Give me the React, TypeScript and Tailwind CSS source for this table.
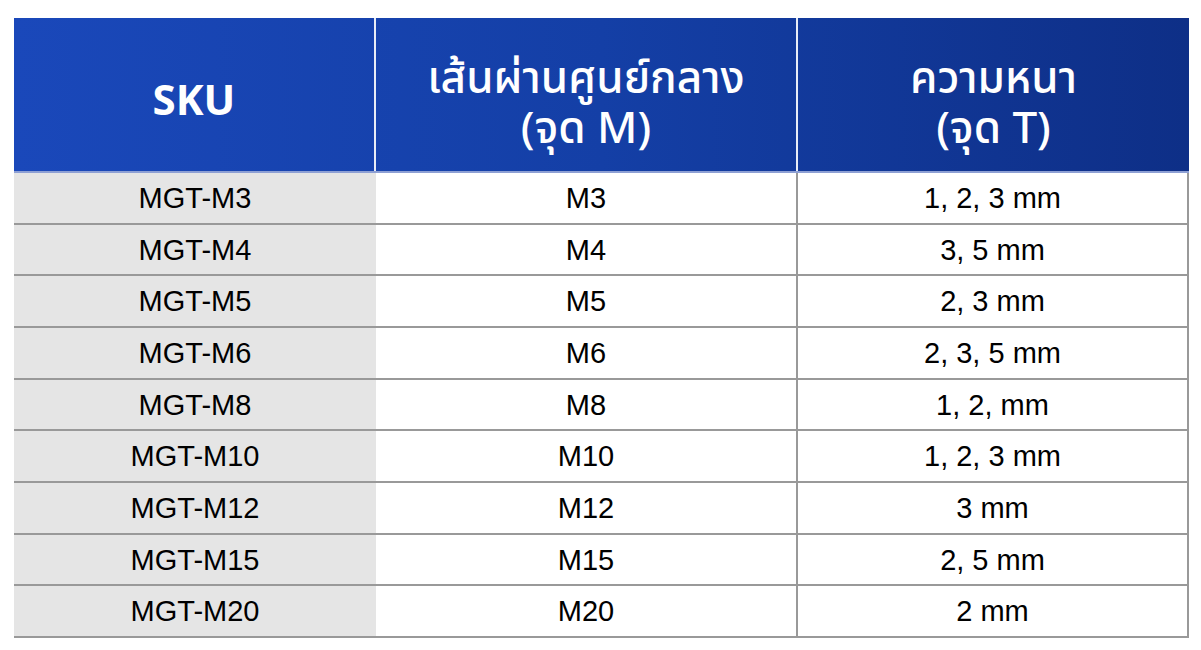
const rows = [
  ["MGT-M3", "M3", "1, 2, 3 mm"],
  ["MGT-M4", "M4", "3, 5 mm"],
  ["MGT-M5", "M5", "2, 3 mm"],
  ["MGT-M6", "M6", "2, 3, 5 mm"],
  ["MGT-M8", "M8", "1, 2, mm"],
  ["MGT-M10", "M10", "1, 2, 3 mm"],
  ["MGT-M12", "M12", "3 mm"],
  ["MGT-M15", "M15", "2, 5 mm"],
  ["MGT-M20", "M20", "2 mm"],
];

export default function App() {
  return (
    <div className="w-[1201px] h-[650px] bg-white pt-[18px] pl-[14px]">
      <div className="w-[1175px]">
        {/* header */}
        <div className="grid grid-cols-[362px_422px_391px] h-[155px] bg-gradient-to-r from-[#1a48ba] via-[#143fa6] to-[#0e2f87] border-b-2 border-[#8ea0d4] text-white text-[44px] leading-[50px] font-['Noto_Sans','Noto_Sans_Thai',sans-serif] font-medium">
          <div className="flex items-center justify-center border-r-2 border-[#e8ecf6] pt-2">
            <span className="text-[42px] font-bold">SKU</span>
          </div>
          <div className="flex items-center justify-center border-r-2 border-[#e8ecf6] pt-3">
            <p className="text-center">
              เส้นผ่านศูนย์กลาง
              <br />
              (จุด M)
            </p>
          </div>
          <div className="flex items-center justify-center pt-3">
            <p className="text-center">
              ความหนา
              <br />
              (จุด T)
            </p>
          </div>
        </div>
        {/* body */}
        {rows.map((r) => (
          <div key={r[0]} className="grid grid-cols-[362px_422px_391px] h-[51.67px] border-b-2 border-[#999999] text-[29px] text-black font-['Liberation_Sans',Arial,sans-serif]">
            <div className="flex items-center justify-center bg-[#e5e5e5] pt-0.5">{r[0]}</div>
            <div className="flex items-center justify-center border-r-2 border-[#999999] pt-0.5">{r[1]}</div>
            <div className="flex items-center justify-center border-r-2 border-[#999999] pt-0.5">{r[2]}</div>
          </div>
        ))}
      </div>
    </div>
  );
}
